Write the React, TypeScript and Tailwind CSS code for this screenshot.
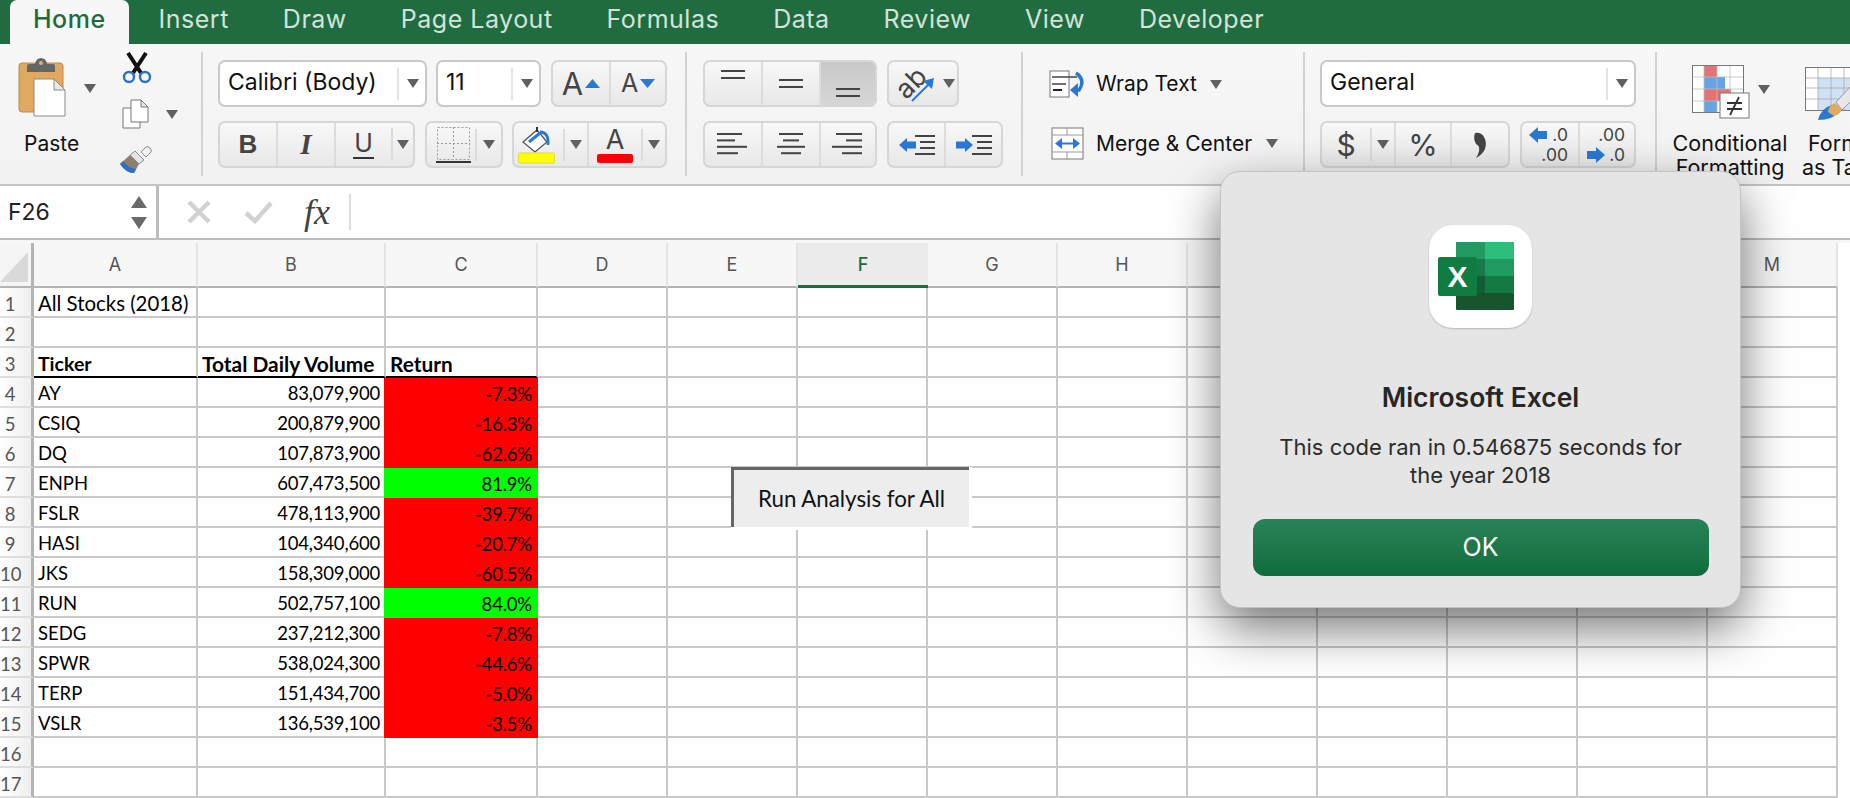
import type { ReactNode } from 'react'

const TABS = ['Insert', 'Draw', 'Page Layout', 'Formulas', 'Data', 'Review', 'View', 'Developer']
const COLUMNS = ['A', 'B', 'C', 'D', 'E', 'F', 'G', 'H', 'I', 'J', 'K', 'L', 'M', 'N']

const STOCKS: [string, string, string, boolean][] = [
  ['AY', '83,079,900', '-7.3%', false],
  ['CSIQ', '200,879,900', '-16.3%', false],
  ['DQ', '107,873,900', '-62.6%', false],
  ['ENPH', '607,473,500', '81.9%', true],
  ['FSLR', '478,113,900', '-39.7%', false],
  ['HASI', '104,340,600', '-20.7%', false],
  ['JKS', '158,309,000', '-60.5%', false],
  ['RUN', '502,757,100', '84.0%', true],
  ['SEDG', '237,212,300', '-7.8%', false],
  ['SPWR', '538,024,300', '-44.6%', false],
  ['TERP', '151,434,700', '-5.0%', false],
  ['VSLR', '136,539,100', '-3.5%', false],
]

function Caret({ className = '' }: { className?: string }) {
  return (
    <svg width="12" height="9" viewBox="0 0 12 9" className={`shrink-0 ${className}`}>
      <path d="M0 0h12L6 9z" fill="#606060" />
    </svg>
  )
}

function Sep() {
  return <div className="mt-[8px] h-[124px] w-[2px] shrink-0 bg-[#d2d2d2]" />
}

function Group({ w, className = '', children }: { w: number; className?: string; children: ReactNode }) {
  return (
    <div
      style={{ width: w }}
      className={`flex h-[47px] shrink-0 rounded-[7px] border-2 border-[#d6d6d6] bg-linear-to-b from-[#f8f8f8] to-[#e8e8e8] ${className}`}
    >
      {children}
    </div>
  )
}

function Btn({ w, active, children }: { w: number; active?: boolean; children: ReactNode }) {
  return (
    <div
      style={{ width: w }}
      className={`flex h-full shrink-0 items-center justify-center border-r-2 border-[#dcdcdc] last:border-r-0 ${active ? 'bg-linear-to-b from-[#c9c9c9] to-[#d6d6d6]' : ''}`}
    >
      {children}
    </div>
  )
}

function Combo({ w, label, divider, className = '' }: { w: number; label: string; divider: number; className?: string }) {
  return (
    <div
      style={{ width: w }}
      className={`flex h-[47px] shrink-0 items-center rounded-[7px] border-2 border-[#c9c9c9] bg-white pl-[8px] text-[23px] text-[#111] ${className}`}
    >
      <span className="-mt-[3px] flex-1 whitespace-nowrap">{label}</span>
      <div style={{ width: divider }} className="flex h-[32px] shrink-0 items-center justify-center border-l-2 border-[#e4e4e4] pl-[1px]">
        <Caret />
      </div>
    </div>
  )
}

function Lines({ rows, y = 0 }: { rows: [number, number][]; y?: number }) {
  return (
    <svg width="32" height="30" viewBox="0 0 32 30">
      {rows.map(([x, w], i) => (
        <rect key={i} x={x} y={y + i * 6.4} width={w} height="2" fill="#444" />
      ))}
    </svg>
  )
}

function Clipboard() {
  return (
    <svg width="50" height="60" viewBox="0 0 50 60">
      <rect x="1" y="6" width="44" height="49" rx="3" fill="#dfa95f" stroke="#b88b4d" />
      <path d="M9 15V9q0-2 2-2h6q1-6 6-6t6 6h6q2 0 2 2v6z" fill="#666" />
      <circle cx="23" cy="6" r="2" fill="#d9b27c" />
      <path d="M16 22h20l11 11v26H16z" fill="#fff" stroke="#8a8a8a" />
      <path d="M36 22v11h11z" fill="#e8e8e8" stroke="#8a8a8a" />
    </svg>
  )
}

function Scissors() {
  return (
    <svg width="30" height="32" viewBox="0 0 30 32">
      <path d="M6 1l13 20M24 1L11 21" stroke="#111" strokeWidth="4" fill="none" />
      <circle cx="7" cy="25" r="5" fill="none" stroke="#2b6fc7" strokeWidth="2.4" />
      <circle cx="23" cy="25" r="5" fill="none" stroke="#2b6fc7" strokeWidth="2.4" />
    </svg>
  )
}

function CopyIcon() {
  return (
    <svg width="27" height="30" viewBox="0 0 27 30">
      <path d="M1 9h17v20H1z" fill="#fff" stroke="#777" />
      <path d="M9 1h10l7 7v15H9z" fill="#fff" stroke="#777" />
      <path d="M19 1v7h7z" fill="#e6e6e6" stroke="#777" />
    </svg>
  )
}

function Brush() {
  return (
    <svg width="32" height="29" viewBox="0 0 32 29">
      <path d="M10 9l9 9-5 9Q6 27 0 18z" fill="#8d7f70" />
      <path d="M0 18q6 9 14 9l2-4Q8 22 3 15z" fill="#2f6fc4" />
      <path d="M10 9l5-4 9 9-5 4z" fill="#e4e4e4" stroke="#8a8a8a" />
      <path d="M21 6l5-5q2-1 4 1t1 4l-5 5z" fill="#f1f1f1" stroke="#8a8a8a" />
    </svg>
  )
}

function BordersIcon() {
  return (
    <svg width="36" height="38" viewBox="0 0 36 38">
      <rect x="1.5" y="1.5" width="32" height="32" fill="none" stroke="#9a9a9a" strokeDasharray="2 2" />
      <path d="M17.5 1v32M1 17.5h33" stroke="#9a9a9a" strokeDasharray="2 2" />
      <rect x="0" y="35" width="35" height="2" fill="#333" />
    </svg>
  )
}

function FillIcon() {
  return (
    <svg width="38" height="42" viewBox="0 0 38 42">
      <path d="M5 18L19 6l10 12-12 10z" fill="#fff" stroke="#555" strokeWidth="1.3" />
      <path d="M11 18l11-9" stroke="#2b78d4" strokeWidth="3" />
      <path d="M19 8V3" stroke="#333" strokeWidth="2" />
      <path d="M22 8q9 0 8 13" fill="none" stroke="#2b78d4" strokeWidth="2.8" />
      <rect x="0.5" y="29" width="36" height="10" rx="1.5" fill="#ffff00" stroke="#dcdc30" />
    </svg>
  )
}

function OrientationIcon() {
  return (
    <div className="relative h-[36px] w-[36px]">
      <span className="absolute left-[-6px] top-[3px] -rotate-45 text-[27px] leading-[27px] text-[#444]">ab</span>
      <svg width="36" height="40" viewBox="0 0 36 40" className="absolute left-0 top-0">
        <path d="M11 35L30 16" stroke="#2b78d4" strokeWidth="2" />
        <path d="M22 15l11-3-2 11z" fill="#2b78d4" />
      </svg>
    </div>
  )
}

function IndentIcon({ flip }: { flip?: boolean }) {
  return (
    <svg width="36" height="20" viewBox="0 0 36 20">
      <path d={flip ? 'M17 10L9 3v3.5H0v7h9V17z' : 'M0 10l8-7v3.5h9v7H8V17z'} fill="#2b78d4" />
      <rect x="16" y="0" width="20" height="2" fill="#444" />
      <rect x="21" y="6" width="15" height="2" fill="#444" />
      <rect x="21" y="12" width="15" height="2" fill="#444" />
      <rect x="16" y="18" width="20" height="2" fill="#444" />
    </svg>
  )
}

function WrapIcon() {
  return (
    <svg width="40" height="30" viewBox="0 0 40 30">
      <rect x="1" y="2" width="19" height="26" fill="#fff" stroke="#777" />
      <path d="M3 8h25M3 15h14" stroke="#444" strokeWidth="1.6" />
      <path d="M4 21h9" stroke="#222" strokeWidth="2" />
      <path d="M27 4q10 7 3 17h-6" fill="none" stroke="#2b78d4" strokeWidth="3.4" />
      <path d="M29 14v14l-8-7z" fill="#2b78d4" />
    </svg>
  )
}

function MergeIcon() {
  return (
    <svg width="33" height="33" viewBox="0 0 33 33">
      <rect x="1" y="1" width="31" height="31" fill="#fff" stroke="#777" />
      <path d="M1 8h31M1 25h31M16 1v7M16 25v7" stroke="#999" />
      <path d="M8 16.5h17" stroke="#2b78d4" strokeWidth="2" />
      <path d="M11 11l-7 5.5 7 5.5zM22 11l7 5.5-7 5.5z" fill="#2b78d4" />
    </svg>
  )
}

function CommaIcon() {
  return (
    <svg width="14" height="26" viewBox="0 0 14 26">
      <path d="M2 1q6-1 9 4t1 12q-3 6-9 9q4-6 3-11q-1-2-3-3q-3-5-1-11z" fill="#444" />
    </svg>
  )
}

function DecimalIcon({ more }: { more?: boolean }) {
  return (
    <div className="relative flex h-[40px] w-[36px] flex-col items-end text-[17.5px] leading-[20px] text-[#444]">
      <div>{more ? '.00' : '.0'}</div>
      <div>{more ? '.0' : '.00'}</div>
      <svg
        width="18"
        height="16"
        viewBox="0 0 18 16"
        className={`absolute ${more ? 'left-[-2px] top-[22px]' : 'left-[-3px] top-[2px]'}`}
      >
        <path d={more ? 'M0 4h9V0l9 8-9 8v-4H0z' : 'M18 4H9V0L0 8l9 8v-4h9z'} fill="#2b78d4" />
      </svg>
    </div>
  )
}

function CondFormatIcon() {
  return (
    <svg width="60" height="54" viewBox="0 0 60 54">
      <rect x="0.5" y="0.5" width="51" height="47" fill="#fff" stroke="#777" />
      <rect x="12" y="1" width="13" height="11" fill="#e57373" />
      <rect x="12" y="12" width="21" height="12" fill="#64a5e8" />
      <rect x="12" y="24" width="27" height="12" fill="#e57373" />
      <rect x="12" y="36" width="13" height="11" fill="#64a5e8" />
      <path d="M12 1v46M25 1v46M38 1v46M1 12h50M1 24h50M1 36h50" stroke="#bdbdbd" strokeWidth="0.8" />
      <rect x="28" y="28" width="29" height="25" fill="#fff" stroke="#777" />
      <path d="M35 38h15M35 44h15M38 50l9-18" stroke="#333" strokeWidth="1.8" />
    </svg>
  )
}

function FormatTableIcon() {
  return (
    <svg width="56" height="54" viewBox="0 0 56 54">
      <rect x="0.5" y="0.5" width="56" height="43" fill="#fff" stroke="#777" />
      <rect x="13" y="11" width="43" height="32" fill="#cfe1f5" />
      <path d="M13 1v42M26 1v42M39 1v42M1 11h55M1 21h55M1 32h55" stroke="#a9a9a9" strokeWidth="0.8" />
      <path d="M13 53q3-12 14-15l6 7q-5 8-20 8z" fill="#2b78d4" />
      <path d="M23 45q1-7 7-9l7 7q-3 5-8 6z" fill="#dfa95f" />
      <path d="M31 35L47 18v15L37 43z" fill="#e7e7e7" stroke="#999" />
    </svg>
  )
}

function ExcelLogo() {
  return (
    <svg width="103" height="103" viewBox="0 0 103 103">
      <rect x="27" y="17" width="29" height="17" fill="#1f9a60" />
      <rect x="56" y="17" width="29" height="17" fill="#2ebd7b" />
      <rect x="27" y="34" width="29" height="17" fill="#187a4a" />
      <rect x="56" y="34" width="29" height="17" fill="#1f9a60" />
      <rect x="27" y="51" width="29" height="17" fill="#125c36" />
      <rect x="56" y="51" width="29" height="17" fill="#137a43" />
      <rect x="27" y="68" width="58" height="17" rx="1" fill="#18552f" />
      <rect x="9" y="32" width="39" height="39" rx="2" fill="#107c41" />
      <text x="28.5" y="62" textAnchor="middle" fontSize="30" fontWeight="700" fill="#fff" fontFamily="Liberation Sans, sans-serif">
        X
      </text>
    </svg>
  )
}

function Ribbon() {
  return (
    <div className="flex h-[142px] shrink-0 overflow-hidden border-b-2 border-[#c4c4c4] bg-linear-to-b from-[#f7f7f7] to-[#f2f2f2]">
      {/* clipboard */}
      <div className="flex w-[201px] shrink-0">
        <div className="ml-[18px] flex w-[85px] flex-col">
          <div className="mt-[13px] flex items-center">
            <Clipboard />
            <Caret className="ml-[16px] mt-[3px]" />
          </div>
          <span className="ml-[6px] mt-[11px] text-[21px] text-[#111]">Paste</span>
        </div>
        <div className="ml-[19px] flex flex-col">
          <div className="mt-[8px] h-[32px]">
            <Scissors />
          </div>
          <div className="mt-[15px] flex items-center">
            <CopyIcon />
            <Caret className="ml-[17px]" />
          </div>
          <div className="-ml-[2px] mt-[17px]">
            <Brush />
          </div>
        </div>
      </div>
      <Sep />

      {/* font */}
      <div className="flex w-[482px] shrink-0 flex-col gap-[14px] pl-[15px] pt-[16px]">
        <div className="flex">
          <Combo w={209} label="Calibri (Body)" divider={28} />
          <Combo w={105} label="11" divider={28} className="ml-[9px]" />
          <Group w={116} className="ml-[10px]">
            <Btn w={58}>
              <span className="text-[31px] leading-none text-[#444]">A</span>
              <svg width="15" height="9" viewBox="0 0 15 9" className="ml-[2px]">
                <path d="M0 9h15L7.5 0z" fill="#2b78d4" />
              </svg>
            </Btn>
            <Btn w={54}>
              <span className="text-[25px] leading-none text-[#444]">A</span>
              <svg width="15" height="9" viewBox="0 0 15 9" className="ml-[2px]">
                <path d="M0 0h15L7.5 9z" fill="#2b78d4" />
              </svg>
            </Btn>
          </Group>
        </div>
        <div className="flex">
          <Group w={197}>
            <Btn w={58}>
              <span className="text-[26px] font-bold text-[#444] font-['Liberation_Sans',sans-serif]">B</span>
            </Btn>
            <Btn w={58}>
              <span className="text-[29px] font-bold italic text-[#444] font-['Liberation_Serif',serif]">I</span>
            </Btn>
            <div className="flex h-full w-[55px] shrink-0 items-center justify-center">
              <span className="border-b-2 border-[#333] px-[1px] text-[25px] leading-[27px] text-[#444]">U</span>
            </div>
            <div className="my-[5px] flex w-[22px] items-center justify-center border-l-2 border-[#dcdcdc]">
              <Caret />
            </div>
          </Group>
          <Group w={78} className="ml-[10px] items-center">
            <div className="ml-[9px] mt-[1px]">
              <BordersIcon />
            </div>
            <div className="ml-[3px] flex h-[32px] flex-1 items-center justify-center border-l-2 border-[#dcdcdc]">
              <Caret />
            </div>
          </Group>
          <Group w={155} className="ml-[9px] items-center">
            <div className="ml-[4px]">
              <FillIcon />
            </div>
            <div className="ml-[7px] flex h-[32px] w-[24px] shrink-0 items-center justify-center border-l-2 border-[#dcdcdc]">
              <Caret />
            </div>
            <div className="flex h-full w-[54px] shrink-0 flex-col items-center border-l-2 border-[#dcdcdc] pt-[2px]">
              <span className="text-[27px] leading-[29px] text-[#444]">A</span>
              <div className="h-[9px] w-[36px] rounded-[2px] bg-[#ff0000]" />
            </div>
            <div className="flex h-[32px] flex-1 items-center justify-center border-l-2 border-[#dcdcdc]">
              <Caret />
            </div>
          </Group>
        </div>
      </div>
      <Sep />

      {/* alignment */}
      <div className="flex w-[334px] shrink-0 flex-col gap-[14px] pl-[16px] pt-[16px]">
        <div className="flex">
          <Group w={174} className="overflow-hidden">
            <Btn w={58}>
              <div className="-mt-[18px] flex w-[24px] flex-col gap-[5px]">
                <div className="h-[2px] bg-[#444]" />
                <div className="h-[2px] bg-[#444]" />
              </div>
            </Btn>
            <Btn w={58}>
              <div className="flex w-[24px] flex-col gap-[5px]">
                <div className="h-[2px] bg-[#444]" />
                <div className="h-[2px] bg-[#444]" />
              </div>
            </Btn>
            <Btn w={54} active>
              <div className="mt-[18px] flex w-[24px] flex-col gap-[5px]">
                <div className="h-[2px] bg-[#444]" />
                <div className="h-[2px] bg-[#444]" />
              </div>
            </Btn>
          </Group>
          <Group w={72} className="ml-[10px] items-center">
            <div className="ml-[12px]">
              <OrientationIcon />
            </div>
            <Caret className="ml-[6px]" />
          </Group>
        </div>
        <div className="flex">
          <Group w={174}>
            <Btn w={58}>
              <Lines rows={[[0, 25], [0, 18], [0, 30], [0, 21]]} y={3} />
            </Btn>
            <Btn w={58}>
              <Lines rows={[[4, 24], [8, 16], [2, 28], [6, 20]]} y={3} />
            </Btn>
            <Btn w={54}>
              <Lines rows={[[4, 26], [14, 16], [0, 30], [10, 20]]} y={3} />
            </Btn>
          </Group>
          <Group w={116} className="ml-[10px]">
            <Btn w={57}>
              <IndentIcon />
            </Btn>
            <Btn w={55}>
              <IndentIcon flip />
            </Btn>
          </Group>
        </div>
      </div>
      <Sep />

      {/* wrap and merge */}
      <div className="flex w-[280px] shrink-0 flex-col pl-[26px] pt-[25px] text-[21px] text-[#111]">
        <div className="flex h-[30px] items-center">
          <WrapIcon />
          <span className="ml-[7px]">Wrap Text</span>
          <Caret className="ml-[13px]" />
        </div>
        <div className="mt-[27px] flex h-[35px] items-center">
          <div className="ml-[2px]">
            <MergeIcon />
          </div>
          <span className="ml-[12px]">Merge &amp; Center</span>
          <Caret className="ml-[14px]" />
        </div>
      </div>
      <Sep />

      {/* number */}
      <div className="flex w-[350px] shrink-0 flex-col gap-[14px] pl-[15px] pt-[16px]">
        <Combo w={316} label="General" divider={28} />
        <div className="flex">
          <Group w={190}>
            <div className="flex h-full w-[48px] shrink-0 items-center justify-center">
              <span className="text-[30px] leading-none text-[#444]">$</span>
            </div>
            <div className="my-[5px] flex w-[24px] shrink-0 items-center justify-center border-l-2 border-[#dcdcdc]">
              <Caret />
            </div>
            <div className="flex w-[58px] shrink-0 items-center justify-center border-x-2 border-[#dcdcdc]">
              <span className="text-[30px] leading-none text-[#444]">%</span>
            </div>
            <div className="flex flex-1 items-center justify-center">
              <CommaIcon />
            </div>
          </Group>
          <Group w={116} className="ml-[10px]">
            <Btn w={58}>
              <DecimalIcon />
            </Btn>
            <Btn w={54}>
              <DecimalIcon more />
            </Btn>
          </Group>
        </div>
      </div>
      <Sep />

      {/* styles */}
      <div className="flex flex-1 overflow-hidden text-[21.5px] leading-[24px] text-[#111]">
        <div className="ml-[17px] flex w-[112px] shrink-0 flex-col items-center">
          <div className="relative mt-[21px] ml-[36px] h-[66px] w-[76px] self-start -translate-x-[18px]">
            <CondFormatIcon />
            <Caret className="absolute left-[66px] top-[20px]" />
          </div>
          <span className="whitespace-nowrap">Conditional</span>
          <span className="whitespace-nowrap">Formatting</span>
        </div>
        <div className="ml-[16px] flex shrink-0 flex-col">
          <div className="ml-[3px] mt-[23px] h-[64px] w-[56px]">
            <FormatTableIcon />
          </div>
          <span className="ml-[6px] whitespace-nowrap">Format</span>
          <span className="whitespace-nowrap">as Table</span>
        </div>
      </div>
    </div>
  )
}

function FormulaBar() {
  return (
    <div className="flex h-[52px] shrink-0 bg-white">
      <div className="flex w-[159px] shrink-0 items-center border-r-[3px] border-[#bdbdbd] pl-[8px] text-[23px] text-[#222]">
        <span className="flex-1">F26</span>
        <div className="mr-[9px] flex flex-col gap-[9px]">
          <svg width="16" height="12" viewBox="0 0 16 12">
            <path d="M0 12h16L8 0z" fill="#6a6a6a" />
          </svg>
          <svg width="16" height="12" viewBox="0 0 16 12">
            <path d="M0 0h16L8 12z" fill="#6a6a6a" />
          </svg>
        </div>
      </div>
      <div className="ml-[27px] flex items-center">
        <svg width="26" height="26" viewBox="0 0 26 26">
          <path d="M3 3l20 20M23 3L3 23" stroke="#d2d2d2" strokeWidth="4.5" />
        </svg>
        <svg width="30" height="24" viewBox="0 0 30 24" className="ml-[32px]">
          <path d="M2 13l9 8L27 3" fill="none" stroke="#d2d2d2" strokeWidth="4.5" />
        </svg>
        <span className="ml-[30px] font-['Liberation_Serif',serif] text-[36px] italic leading-none text-[#444]">fx</span>
        <div className="ml-[19px] h-[36px] w-[2px] bg-[#dedede]" />
      </div>
    </div>
  )
}

function Cell({ text, right, bold, last, size = '' }: { text?: string; right?: boolean; bold?: boolean; last?: boolean; size?: string }) {
  return (
    <div
      className={`flex h-[30px] items-center overflow-visible whitespace-nowrap border-r-2 border-[#c9c9c9] pt-[3px] text-black ${last ? 'border-b-2 border-b-black' : 'border-b-2'} ${right ? 'justify-end pr-[4px] tracking-[-0.2px]' : 'pl-[4px]'} ${bold ? 'font-bold' : ''} ${size}`}
    >
      {text}
    </div>
  )
}

function Sheet() {
  const rows = Array.from({ length: 17 }, (_, i) => i + 1)
  return (
    <div className="grid w-[1968px] grid-cols-[34px_164px_188px_152px_repeat(10,130px)] font-['Lato',sans-serif] text-[18.5px]">
      {/* header row */}
      <div className="relative h-[45px] border-b-2 border-r-[3px] border-[#b4b4b4] bg-[#f5f5f5]">
        <svg width="28" height="30" viewBox="0 0 28 30" className="absolute left-0 top-[9px]">
          <path d="M28 0v30H0z" fill="#d9d9d9" />
        </svg>
      </div>
      {COLUMNS.slice(0, 13).map((c) => (
        <div
          key={c}
          className={`flex h-[45px] items-center justify-center font-['Inter',sans-serif] text-[18px] ${
            c === 'F'
              ? 'border-b-[3px] border-[#1f6b3e] bg-[#ececec] font-medium text-[#1f6b3e]'
              : 'border-b-2 border-r-2 border-b-[#b4b4b4] border-r-[#e4e4e4] bg-[#f7f7f7] text-[#555]'
          }`}
        >
          {c}
        </div>
      ))}

      {rows.map((n) => {
        const stock = n >= 4 && n <= 15 ? STOCKS[n - 4] : null
        return (
          <div key={n} className="contents">
            <div className="h-[30px] border-b-2 border-r-[3px] border-b-[#dedede] border-r-[#b4b4b4] bg-linear-to-r from-[#ffffff] to-[#efefef] text-[#555]">
              <div className="w-[20px] text-center leading-[32px]">{n}</div>
            </div>
            <Cell
              text={n === 1 ? 'All Stocks (2018)' : n === 3 ? 'Ticker' : stock?.[0]}
              bold={n === 3}
              last={n === 3}
              size={n === 1 ? 'text-[20.4px]' : n === 3 ? 'text-[19.5px]' : ''}
            />
            {n === 3 ? (
              <Cell text="Total Daily Volume" bold last size="text-[20.9px]" />
            ) : (
              <Cell text={stock?.[1]} right />
            )}
            {stock ? (
              <div
                className={`flex h-[30px] items-center justify-end pr-[6px] pt-[3px] tracking-[-0.2px] text-black ${
                  stock[3] ? 'bg-[#00ff00] shadow-[-2px_0_0_#00ff00]' : 'bg-[#ff0000] shadow-[-2px_0_0_#ff0000]'
                }`}
              >
                {stock[2]}
              </div>
            ) : (
              <Cell text={n === 3 ? 'Return' : undefined} bold={n === 3} last={n === 3} size={n === 3 ? 'text-[20.8px]' : ''} />
            )}
            {COLUMNS.slice(3, 13).map((c) => (
              <Cell key={c} />
            ))}
          </div>
        )
      })}
    </div>
  )
}

export default function App() {
  return (
    <div className="relative h-[798px] w-[1850px] overflow-hidden bg-white font-['Inter',sans-serif]">
      <div className="flex h-[44px] items-end bg-[#206b3f] text-[25px] tracking-[0.5px]">
        <div className="ml-[10px] flex h-[44px] items-center rounded-t-[7px] bg-[#f7f7f7] px-[23px] pb-[4px] font-medium text-[#1f6b3e]">
          Home
        </div>
        <div className="ml-[30px] flex h-[44px] items-center gap-[54px] pb-[4px] text-[#d3e3d9]">
          {TABS.map((t) => (
            <span key={t} className="whitespace-nowrap">
              {t}
            </span>
          ))}
        </div>
      </div>
      <Ribbon />
      <FormulaBar />
      <div className="h-[5px] border-t-2 border-[#bdbdbd] bg-[#f7f7f7]" />
      <Sheet />

      {/* form button sitting on the sheet */}
      <div className="absolute left-[731px] top-[467px] bg-white pb-[3px] pr-[3px]">
        <div className="flex h-[60px] w-[238px] items-center justify-center border-l-[3px] border-t-[3px] border-[#666] bg-[#ededed] font-['Lato',sans-serif] text-[22.3px] text-[#111]">
          Run Analysis for All
        </div>
      </div>

      {/* alert */}
      <div className="absolute left-[1220px] top-[171px] flex h-[437px] w-[521px] flex-col items-center rounded-[20px] border border-[#c4c4c4] bg-[#e5e5e5] shadow-[0_20px_50px_rgba(0,0,0,0.55)]">
        <div className="mt-[53px] h-[103px] w-[103px] rounded-[24px] bg-white shadow-[0_1px_2px_rgba(0,0,0,0.2)]">
          <ExcelLogo />
        </div>
        <div className="mt-[53px] text-[26.5px] font-semibold leading-[32px] text-[#262626]">Microsoft Excel</div>
        <div className="mt-[20px] w-[420px] text-center text-[22px] leading-[28px] text-[#2b2b2b]">
          This code ran in 0.546875 seconds for the year 2018
        </div>
        <div className="mt-[30px] flex h-[57px] w-[456px] items-center justify-center rounded-[12px] bg-linear-to-b from-[#2a8258] to-[#0e6d3d] text-[25px] text-white">
          OK
        </div>
      </div>
    </div>
  )
}
